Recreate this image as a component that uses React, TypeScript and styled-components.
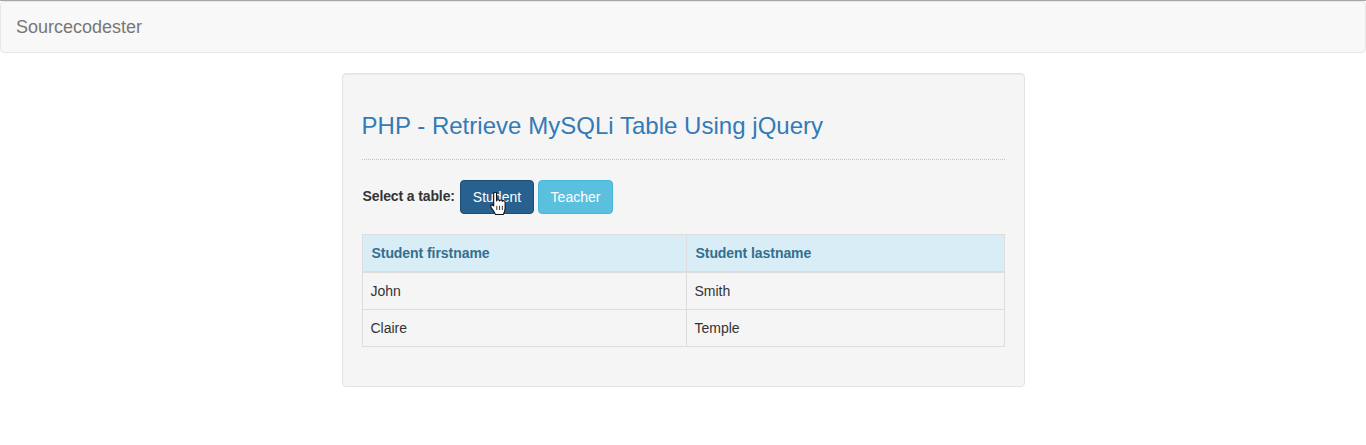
import React from 'react'
import styled, { createGlobalStyle } from 'styled-components'

const GlobalStyle = createGlobalStyle`
  * { box-sizing: border-box; }
  body {
    margin: 0;
    border-top: 1px solid #a6a6a6;
    background: #fff;
    color: #333;
    font-family: "Liberation Sans", Arial, sans-serif;
    font-size: 14px;
    line-height: 1.42857143;
  }
`

const Navbar = styled.nav`
  min-height: 52px;
  margin-bottom: 20px;
  background: #f8f8f8;
  border: 1px solid #e7e7e7;
  border-radius: 4px;
`

const Brand = styled.a`
  display: block;
  height: 50px;
  padding: 15px;
  font-size: 18px;
  line-height: 20px;
  color: #777;
`

const Well = styled.main`
  width: 683px;
  margin: 0 auto;
  padding: 19px;
  background: #f5f5f5;
  border: 1px solid #e3e3e3;
  border-radius: 4px;
  box-shadow: inset 0 1px 1px rgba(0, 0, 0, 0.05);
`

const Title = styled.h3`
  margin: 20px 0 10px;
  font-size: 24px;
  font-weight: 500;
  line-height: 1.1;
  letter-spacing: 0.025px;
  color: #337ab7;
`

const Divider = styled.hr`
  margin: 20px 0;
  border: 0;
  border-top: 1px dotted #c4c4c4;
`

const Toolbar = styled.div`
  display: flex;
  align-items: center;
  gap: 4px;
  margin-bottom: 20px;
`

const Label = styled.label`
  width: 94px;
  padding: 0 0 2px 1px;
  font-weight: 700;
  letter-spacing: -0.12px;
  white-space: nowrap;
`

const Button = styled.button<{ $tone: 'primary' | 'info'; $width: number }>`
  position: relative;
  width: ${p => p.$width}px;
  height: 34px;
  padding: 6px 0 6px 1px;
  font-family: inherit;
  font-size: 14px;
  line-height: 20px;
  color: #fff;
  border: 1px solid ${p => (p.$tone === 'primary' ? '#204d74' : '#46b8da')};
  border-radius: 4px;
  background: ${p => (p.$tone === 'primary' ? '#286090' : '#5bc0de')};
`

const Cursor = styled.svg`
  position: absolute;
  left: 29px;
  top: 11px;
  width: 17px;
  height: 24px;
`

const Table = styled.table`
  width: 642px;
  margin-bottom: 20px;
  table-layout: fixed;
  border-collapse: collapse;
  border-spacing: 0;
  border: 1px solid #ddd;
`

const HeadCell = styled.th`
  height: 37px;
  padding: 8px 8px 8px 9px;
  text-align: left;
  vertical-align: bottom;
  font-weight: 700;
  letter-spacing: -0.06px;
  color: #31708f;
  background: #d9edf7;
  border: 1px solid #ddd;
  border-bottom: 2px solid #ddd;
`

const Cell = styled.td`
  height: 37px;
  padding: 8px;
  vertical-align: top;
  border: 1px solid #ddd;
`

const rows = [
  ['John', 'Smith'],
  ['Claire', 'Temple'],
]

const App: React.FC = () => {
  return (
    <>
      <GlobalStyle />
      <Navbar>
        <Brand>Sourcecodester</Brand>
      </Navbar>
      <Well>
        <Title>PHP - Retrieve MySQLi Table Using jQuery</Title>
        <Divider />
        <Toolbar>
          <Label>Select a table:</Label>
          <Button $tone="primary" $width={74}>
            Student
            {/* mouse pointer over the button */}
            <Cursor viewBox="1 1 14 20" aria-hidden="true">
              <path
                d="M4 2.2c0-1.5 2.4-1.5 2.4 0v6.2c.2-1.3 2.4-1.3 2.5.1.3-1.2 2.3-1.1 2.4.3.4-1 2.2-.8 2.2.7v5c0 2.5-1 3.5-1.4 5.2H5.4c-.6-1.8-2-3.5-3.5-5.7-1.1-1.7.6-3 1.8-1.7l.3.4z"
                fill="#fff"
                stroke="#111"
                strokeWidth="0.9"
                strokeLinejoin="round"
              />
              <path d="M6.6 12.5v3.5M8.9 12.5v3.5M11.2 12.5v3.5" stroke="#111" strokeWidth="0.7" />
            </Cursor>
          </Button>
          <Button $tone="info" $width={75}>Teacher</Button>
        </Toolbar>
        <Table>
          <colgroup>
            <col width="324" />
            <col width="318" />
          </colgroup>
          <thead>
            <tr>
              <HeadCell>Student firstname</HeadCell>
              <HeadCell>Student lastname</HeadCell>
            </tr>
          </thead>
          <tbody>
            {rows.map(row => (
              <tr key={row[0]}>
                <Cell>{row[0]}</Cell>
                <Cell>{row[1]}</Cell>
              </tr>
            ))}
          </tbody>
        </Table>
      </Well>
    </>
  )
}

export default App
